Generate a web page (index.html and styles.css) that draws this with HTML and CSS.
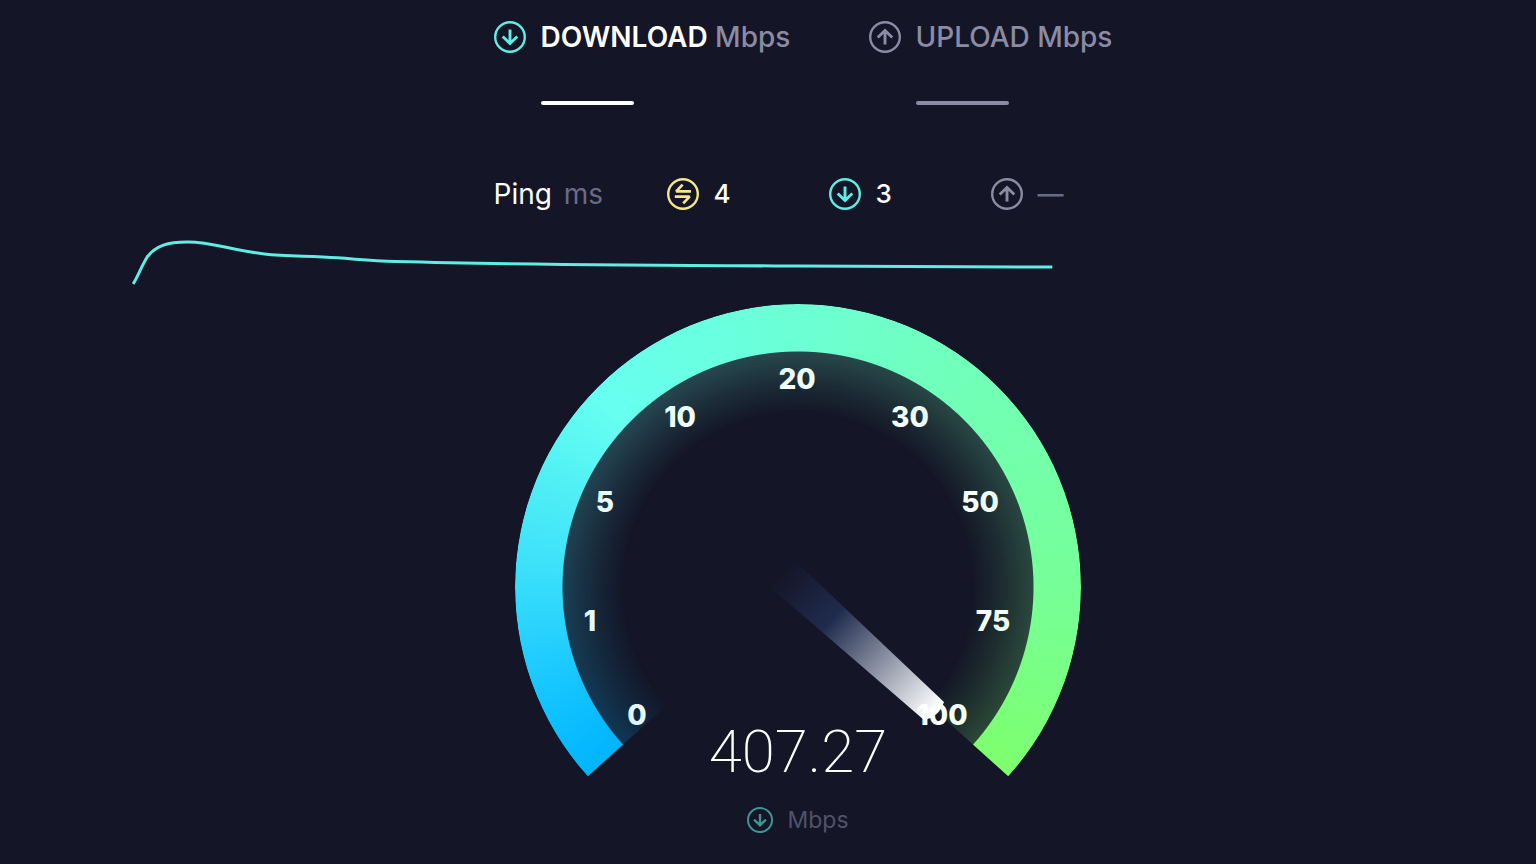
FILE: index.html
```html
<!DOCTYPE html>
<html lang="en">
<head>
<meta charset="utf-8">
<meta name="viewport" content="width=device-width, initial-scale=1">
<title>Speed test</title>
<link rel="stylesheet" href="styles.css">
</head>
<body>
<svg class="symbols" aria-hidden="true">
  <symbol id="down" viewBox="0 0 32 32">
    <circle cx="16" cy="16" r="14.8"/>
    <path stroke-width="2.900" d="M16 8.500v14M8.700 15.500l7.300 7 7.300-7"/>
  </symbol>
  <symbol id="up" viewBox="0 0 32 32">
    <circle cx="16" cy="16" r="14.8"/>
    <path stroke-width="2.900" d="M16 23.500v-14M8.700 16.500l7.300-7 7.300 7"/>
  </symbol>
  <symbol id="swap" viewBox="0 0 32 32">
    <circle cx="16" cy="16" r="14.8"/>
    <path stroke-width="2.700" stroke-linejoin="bevel" d="M24 13.400H9.200l6.400-6.800M7.800 18.600h14.800l-6.400 6.800"/>
  </symbol>
</svg>
<main class="page">
  <section class="results">
    <div class="result">
      <svg class="icon teal"><use href="#down"/></svg>
      <h2 class="title"><strong>DOWNLOAD</strong> Mbps</h2>
      <span class="dash white"></span>
    </div>
    <div class="result muted">
      <svg class="icon"><use href="#up"/></svg>
      <h2 class="title">UPLOAD Mbps</h2>
      <span class="dash"></span>
    </div>
  </section>
  <section class="pings">
    <p class="ping-label">Ping <span>ms</span></p>
    <p class="ping"><svg class="icon yellow"><use href="#swap"/></svg>4</p>
    <p class="ping"><svg class="icon teal"><use href="#down"/></svg>3</p>
    <p class="ping none"><svg class="icon"><use href="#up"/></svg>—</p>
  </section>
  <svg class="chart" viewBox="0 0 1330 48" aria-hidden="true">
    <path d="M1 45C6 37 9 28 15 18C24 6 36 3.200 55 3C78 2.600 98 11 132 15C154 17.500 178 16.800 205 18.800C228 20.400 238 21.800 264 22.500C400 26 560 26.500 666 27C780 28 860 27.700 919 28"/>
  </svg>
  <section class="gauge">
    <div class="glow"></div>
    <div class="ring"></div>
    <svg class="dial" viewBox="0 0 566 566">
      <defs>
        <linearGradient id="needle" gradientUnits="userSpaceOnUse" x1="265" y1="267" x2="420" y2="406">
          <stop offset="0" stop-color="#1f2b4d" stop-opacity="0"/>
          <stop offset=".34" stop-color="#1f2b4d"/>
          <stop offset="1" stop-color="#ffffff"/>
        </linearGradient>
      </defs>
      <path fill="url(#needle)" d="M255 283L277 254L429 398Q424 413 409 416Z"/>
      <text x="122" y="421">0</text>
      <text x="75" y="327">1</text>
      <text x="90" y="208">5</text>
      <text x="165" y="123">10</text>
      <text x="282" y="85">20</text>
      <text x="395" y="123">30</text>
      <text x="465" y="208">50</text>
      <text x="478" y="327">75</text>
      <text x="427" y="421">100</text>
    </svg>
    <div class="readout">
      <output class="speed">407.27</output>
      <p class="unit"><svg class="icon small"><use href="#down"/></svg>Mbps</p>
    </div>
  </section>
</main>
</body>
</html>
```
FILE: styles.css
```css
* { box-sizing: border-box; }

body {
  margin: 0;
  background: #141526;
  color: #fff;
  font-family: Inter, "Liberation Sans", sans-serif;
  font-size: 26px;
  line-height: 32px;
}

h2, p { margin: 0; }

.symbols { position: absolute; width: 0; height: 0; }

.page {
  display: flex;
  flex-direction: column;
  align-items: center;
  padding: 21px 0 0 60px;
}

.icon {
  width: 32px;
  height: 32px;
  flex: none;
  fill: none;
  stroke: currentColor;
  stroke-width: 2.4;
}

.teal { color: #5eeee4; }
.yellow { color: #f5e884; }
.white { color: #fff; }

.results {
  display: grid;
  grid-template-columns: 375px 234px;
}

.result {
  display: grid;
  grid-template-columns: 32px max-content;
  column-gap: 15px;
  row-gap: 48px;
}

.result.muted { color: #8b8ca3; }

.title {
  color: #8b8ca3;
  font-size: 28px;
  font-weight: 500;
}

.title strong { color: #fff; font-weight: 600; }

.dash {
  grid-column: 2;
  width: 93px;
  height: 4px;
  border-radius: 2px;
  background: currentColor;
}

.pings {
  display: grid;
  grid-template-columns: 173px 162px 162px 112px;
  margin-top: 73px;
}

.ping-label { font-size: 28px; }
.ping-label span { margin-left: 4px; color: #6a6b84; }

.ping { display: flex; gap: 15px; font-weight: 500; }
.ping.none { color: #6a6b84; }
.ping.none .icon { color: #8b8ca3; }

.chart {
  width: calc(100% - 144px);
  margin-top: 29px;
  fill: none;
  stroke: #5eeee4;
  stroke-width: 3;
}

.gauge {
  display: grid;
  width: 566px;
  margin-top: 17px;
}

.gauge > * { grid-area: 1 / 1; }

.ring, .glow {
  height: 566px;
  border-radius: 50%;
  background: conic-gradient(from 228deg, #00b4ff 0deg, #14c4ff 18deg, #3ce0fa 46deg, #66fff0 85deg, #6cffd4 132deg, #72ffb4 178deg, #76ff98 222deg, #7dff6e 264deg);
  clip-path: polygon(0 0, 100% 0, 100% 95%, 50% 50%, 0 95%);
}

.ring { mask-image: radial-gradient(circle, transparent 235px, #000 236px); }

.glow {
  opacity: .22;
  mask-image: radial-gradient(circle, transparent 172px, rgba(0, 0, 0, .4) 200px, #000 236px, transparent 237px);
}

.dial { width: 566px; height: 566px; }

.dial text {
  fill: #fff;
  font-size: 28px;
  font-weight: 800;
  text-anchor: middle;
}

.readout {
  display: flex;
  flex-direction: column;
  align-items: center;
  align-self: start;
  padding-top: 412px;
}

.speed {
  font-family: Roboto, "Liberation Sans", sans-serif;
  font-size: 60px;
  font-weight: 200;
  line-height: 72px;
}

.unit {
  display: flex;
  gap: 14px;
  margin-top: 18px;
  color: #515268;
  font-size: 23px;
  line-height: 28px;
}

.icon.small { width: 26px; height: 28px; color: #3d9696; }
```
